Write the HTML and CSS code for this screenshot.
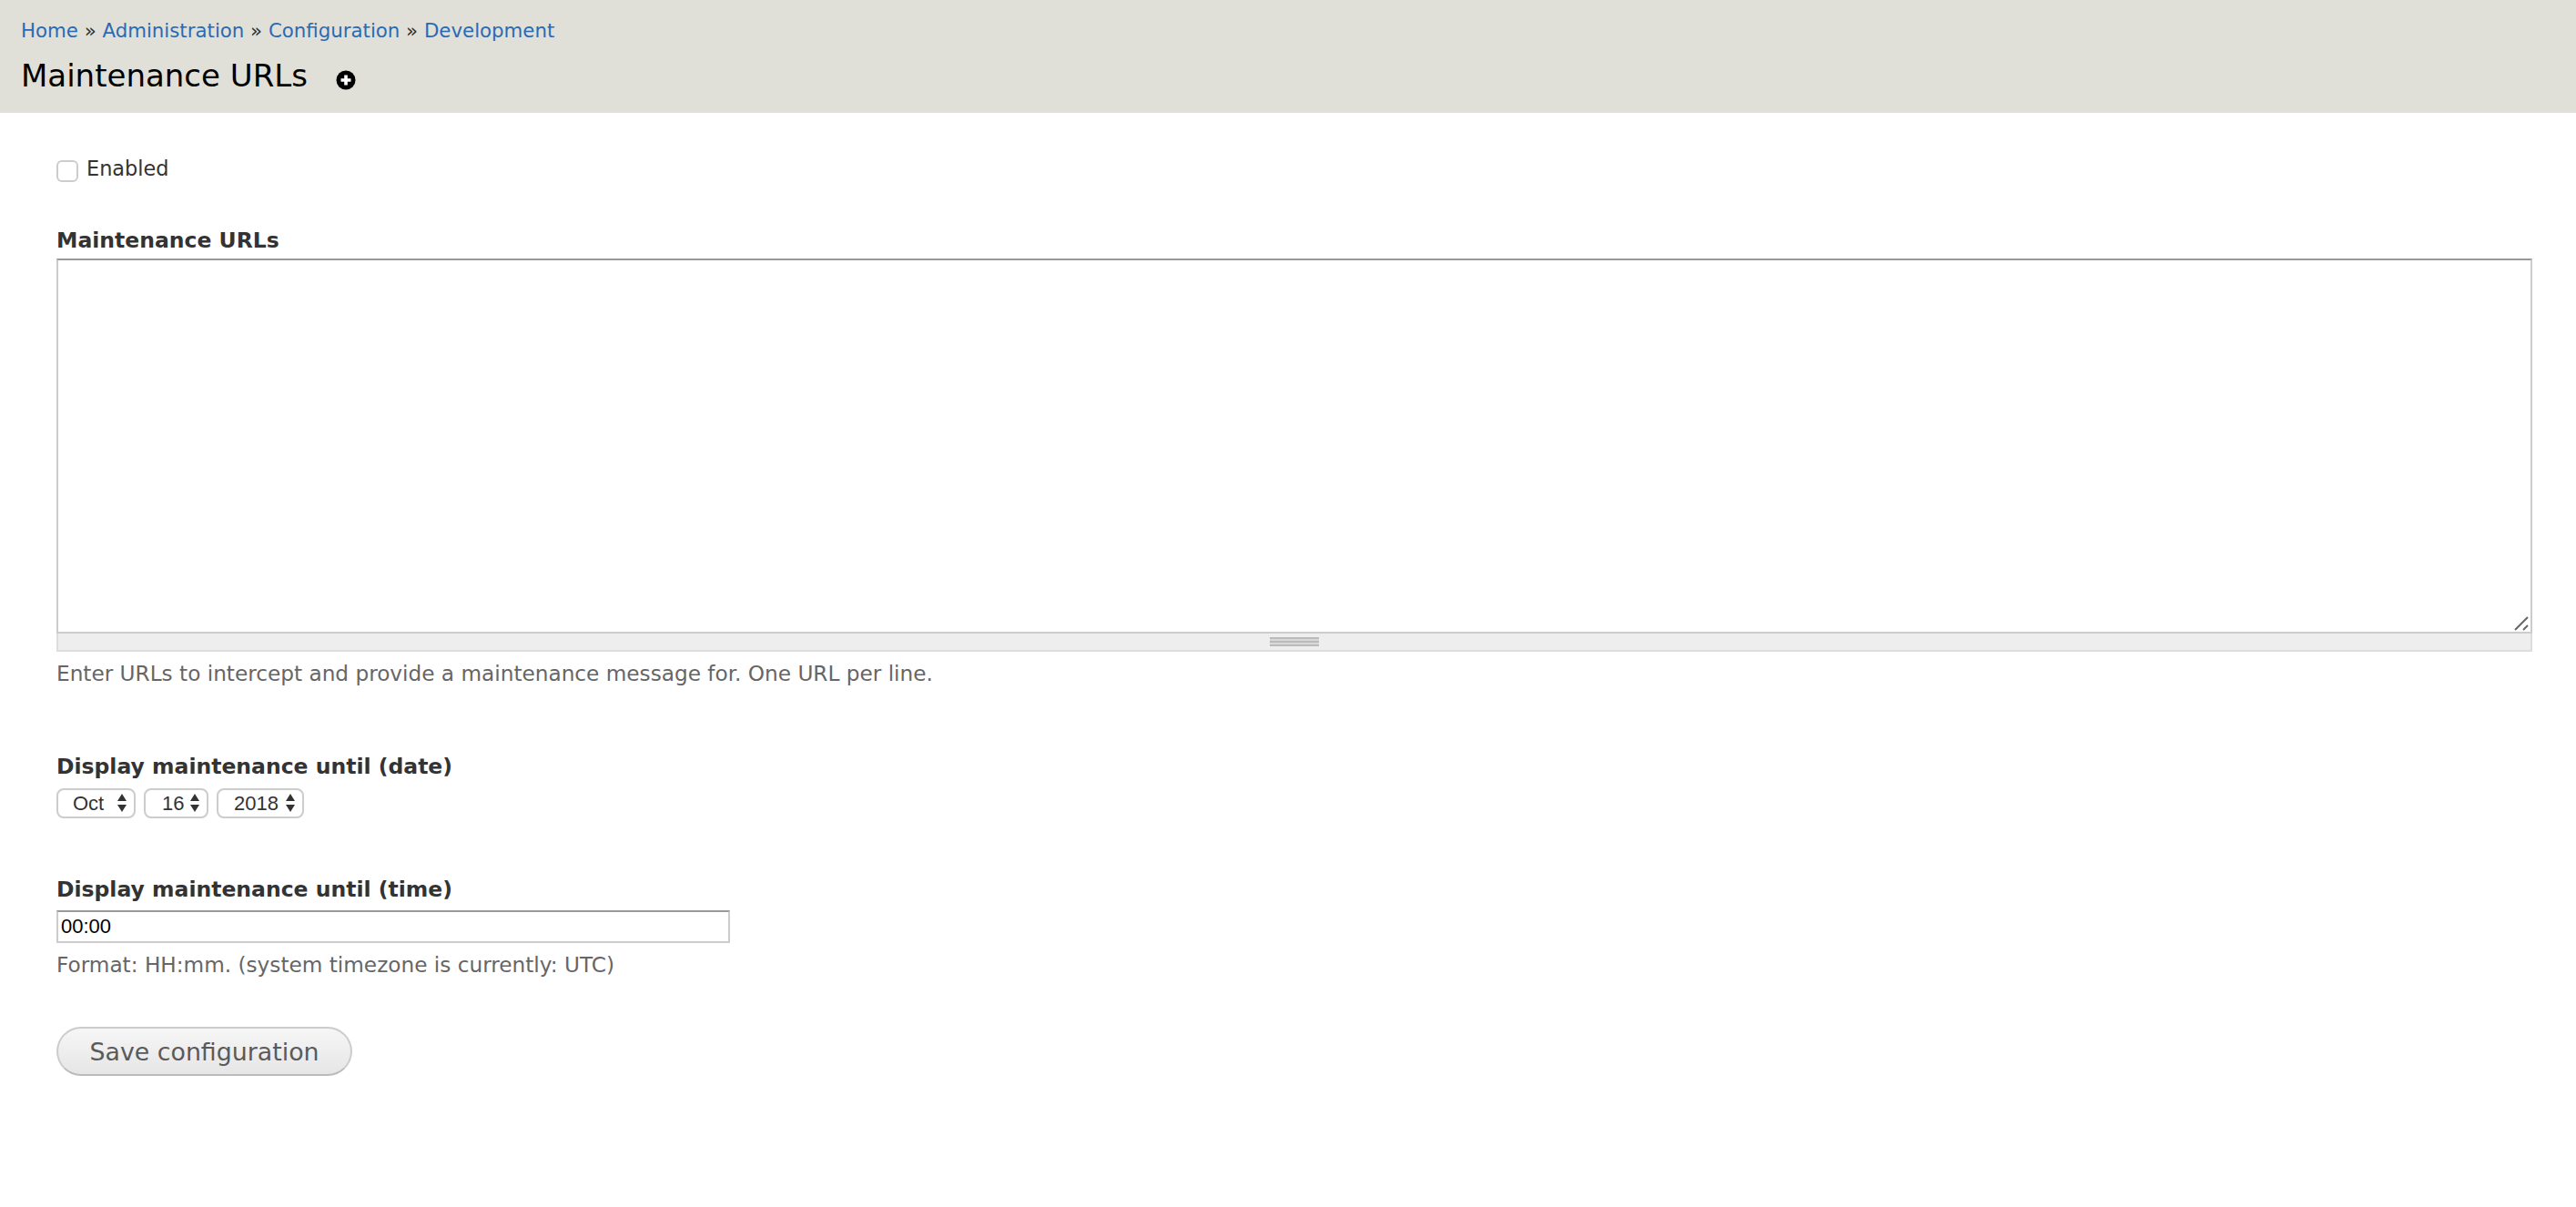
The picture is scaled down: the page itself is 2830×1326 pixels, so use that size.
FILE: index.html
```html
<!DOCTYPE html>
<html lang="en">
<head>
<meta charset="utf-8">
<title>Maintenance URLs</title>
<link rel="stylesheet" href="styles.css">
</head>
<body>
<header class="page-head">
  <nav class="crumbs"><a href="#">Home</a> » <a href="#">Administration</a> » <a href="#">Configuration</a> » <a href="#">Development</a></nav>
  <div class="title-row">
    <h1 class="title">Maintenance URLs</h1>
    <svg class="add-icon" width="22" height="22" viewBox="0 0 22 22"><circle cx="11" cy="11" r="10.5" fill="#000"/><path d="M11 5.5v11M5.5 11h11" stroke="#fff" stroke-width="3.6"/></svg>
  </div>
</header>
<main class="content">
  <label class="check-row"><input class="check" type="checkbox"><span>Enabled</span></label>
  <label class="field-label first-label">Maintenance URLs</label>
  <div class="area-wrap">
    <textarea class="area"></textarea>
    <svg class="resizer" width="16" height="16" viewBox="0 0 16 16"><path d="M1 15L15 1M10 15l5-5" stroke="#666" stroke-width="2" fill="none"/></svg>
  </div>
  <div class="grippie"><span class="grip"></span></div>
  <p class="desc">Enter URLs to intercept and provide a maintenance message for. One URL per line.</p>
  <label class="field-label date-label">Display maintenance until (date)</label>
  <div class="selects">
    <span class="sel sel-month"><select><option>Oct</option></select><svg class="arrows" width="12" height="20" viewBox="0 0 12 20"><path d="M6 0l5 8H1zM6 20l-5-8h10z" fill="#333"/></svg></span>
    <span class="sel sel-day"><select><option>16</option></select><svg class="arrows" width="12" height="20" viewBox="0 0 12 20"><path d="M6 0l5 8H1zM6 20l-5-8h10z" fill="#333"/></svg></span>
    <span class="sel sel-year"><select><option>2018</option></select><svg class="arrows" width="12" height="20" viewBox="0 0 12 20"><path d="M6 0l5 8H1zM6 20l-5-8h10z" fill="#333"/></svg></span>
  </div>
  <label class="field-label time-label">Display maintenance until (time)</label>
  <input class="time" type="text" value="00:00">
  <p class="desc">Format: HH:mm. (system timezone is currently: UTC)</p>
  <button class="save" type="button">Save configuration</button>
</main>
</body>
</html>
```
FILE: styles.css
```css
* { box-sizing: border-box; }
html, body { margin: 0; background: #fff; }
body { font-family: "DejaVu Sans", sans-serif; color: #333; min-height: 1326px; }
.page-head { background: #e0e0d8; height: 124px; padding: 18px 23px 0; }
.crumbs { font-size: 21.3px; line-height: 32px; color: #333; }
.crumbs a { color: #2a6ab5; text-decoration: none; }
.title-row { display: flex; align-items: center; margin-top: 8px; height: 50px; }
.title { margin: 0; font-size: 34px; font-weight: 400; line-height: 50px; color: #000; }
.add-icon { margin-left: 31px; margin-top: 10px; }
.content { padding: 45px 48px 0 62px; }
.check-row { display: flex; align-items: center; height: 32px; font-size: 22.4px; color: #333; gap: 9px; }
.check { appearance: none; margin: 0; width: 24px; height: 24px; border: 2px solid #ccc; border-radius: 6px; background: #fff; position: relative; top: 3px; }
.field-label { display: block; font-size: 23.5px; font-weight: 700; line-height: 32px; color: #333; }
.first-label { margin-top: 47px; margin-bottom: 4px; }
.date-label { margin-top: 70px; margin-bottom: 8px; }
.time-label { margin-top: 62px; margin-bottom: 7px; }
.area-wrap { position: relative; height: 412px; }
.area { display: block; width: 100%; height: 100%; margin: 0; padding: 4px; resize: none; outline: 0; background: #fff; border: 2px solid #ccc; border-top-color: #999; border-radius: 0; }
.resizer { position: absolute; right: 4px; bottom: 3px; }
.grippie { display: flex; justify-content: center; align-items: center; height: 20px; background: #eee; border: 2px solid #ddd; border-top: 0; }
.grip { width: 54px; height: 10px; background: repeating-linear-gradient(#bbb 0 2px, #d8d8d8 2px 4px); }
.desc { margin: 8px 0 0; font-size: 23.2px; line-height: 32px; color: #666; }
.selects { display: flex; gap: 9px; height: 33px; }
.sel { position: relative; display: block; height: 33px; }
.sel-month { width: 87px; }
.sel-day { width: 71px; }
.sel-year { width: 96px; }
.sel select { appearance: none; display: block; width: 100%; height: 100%; margin: 0; border: 2px solid #ccc; border-radius: 8px; background: #fff; font-family: "Liberation Sans", sans-serif; font-size: 22px; color: #333; outline: 0; }
.sel-month select { padding: 0 0 0 16px; }
.sel-day select { padding: 0 0 0 18px; }
.sel-year select { padding: 0 0 0 17px; }
.arrows { position: absolute; top: 6px; right: 9px; pointer-events: none; }
.time { display: block; width: 740px; height: 36px; margin: 0; padding: 0 3px; border: 2px solid #ccc; border-top-color: #999; border-radius: 0; font-family: "Liberation Sans", sans-serif; font-size: 22px; color: #000; outline: 0; background: #fff; }
.save { display: block; width: 325px; height: 54px; margin: 52px 0 0; padding: 0; border: 2px solid #ccc; border-bottom-color: #bbb; border-radius: 27px; background: linear-gradient(#f6f6f6, #e6e6e6); font-family: "DejaVu Sans", sans-serif; font-size: 26.8px; color: #5a5a5a; }
```
